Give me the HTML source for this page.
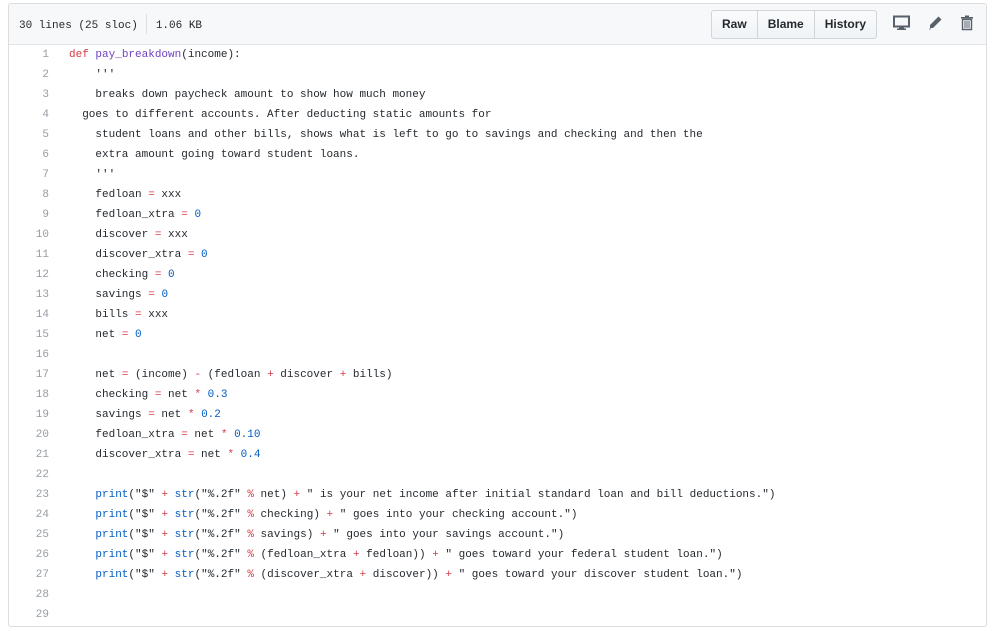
<!DOCTYPE html>
<html><head><style>
body{margin:0;background:#fff;font-family:"Liberation Sans",sans-serif;}
.box{position:absolute;left:8px;top:3px;width:977px;height:622px;border:1px solid #ddd;border-radius:3px;overflow:hidden}
.hd{height:40px;background:#f6f8fa;border-bottom:1px solid #e1e4e8;position:relative}
.info{position:absolute;left:10px;top:11px;font:11px "Liberation Mono",monospace;color:#24292e}
.sep{display:inline-block;width:1px;height:20px;background:#ddd;vertical-align:middle;margin:0 9px 0 8px;position:relative;top:-1px}
.btns{position:absolute;left:702px;top:6px;height:27px;border:1px solid #d1d5da;border-radius:3px;background:linear-gradient(#fafbfc,#eff3f6);display:flex}
.btns span{font:bold 12px "Liberation Sans",sans-serif;color:#24292e;line-height:27px;padding:0 10px;border-left:1px solid #d1d5da}
.btns span:first-child{border-left:0}
.ic{position:absolute;top:11px}
pre{margin:0;font:11px/20px "Liberation Mono",monospace;color:#24292e}
.code{position:absolute;left:0;top:41px}
.row{display:flex;height:20px}
.n{width:40px;text-align:right;color:#959da5;padding-right:20px}
.k{color:#d73a49}.f{color:#6f42c1}.c{color:#005cc5}.s{color:#24292e}
</style></head><body>
<div class="box">
<div class="hd">
<div class="info">30 lines (25 sloc)<span class="sep"></span>1.06 KB</div>
<div class="btns"><span>Raw</span><span>Blame</span><span>History</span></div>
<svg class="ic" style="left:884px" width="18" height="16" viewBox="0 0 18 16"><rect x="1" y="1.5" width="15" height="10" fill="none" stroke="#586069" stroke-width="2"/><rect x="6" y="12" width="5" height="2" fill="#586069"/><rect x="4" y="13.5" width="9" height="1.5" fill="#586069"/></svg>
<svg class="ic" style="left:918px" width="16" height="16" viewBox="0 0 16 16"><path d="M11.5 1.5l3 3-8.5 8.5-3 0 0-3z" fill="#586069"/><path d="M3 13l-1 2 2-1z" fill="#586069"/></svg>
<svg class="ic" style="left:951px" width="14" height="16" viewBox="0 0 14 16"><rect x="1" y="2" width="12" height="1.6" fill="#586069"/><rect x="5" y="0.5" width="4" height="1.5" fill="#586069"/><path d="M2.5 4.5h9v10h-9z" fill="none" stroke="#586069" stroke-width="1.4"/><path d="M5 6v7M7 6v7M9 6v7" stroke="#586069" stroke-width="1"/></svg>
</div>
<pre class="code"><div class="row"><span class="n">1</span><span><span class="k">def</span> <span class="f">pay_breakdown</span>(income):</span></div><div class="row"><span class="n">2</span><span>    '''</span></div><div class="row"><span class="n">3</span><span>    breaks down paycheck amount to show how much money</span></div><div class="row"><span class="n">4</span><span>  goes to different accounts. After deducting static amounts for</span></div><div class="row"><span class="n">5</span><span>    student loans and other bills, shows what is left to go to savings and checking and then the</span></div><div class="row"><span class="n">6</span><span>    extra amount going toward student loans.</span></div><div class="row"><span class="n">7</span><span>    '''</span></div><div class="row"><span class="n">8</span><span>    fedloan <span class="k">=</span> xxx</span></div><div class="row"><span class="n">9</span><span>    fedloan_xtra <span class="k">=</span> <span class="c">0</span></span></div><div class="row"><span class="n">10</span><span>    discover <span class="k">=</span> xxx</span></div><div class="row"><span class="n">11</span><span>    discover_xtra <span class="k">=</span> <span class="c">0</span></span></div><div class="row"><span class="n">12</span><span>    checking <span class="k">=</span> <span class="c">0</span></span></div><div class="row"><span class="n">13</span><span>    savings <span class="k">=</span> <span class="c">0</span></span></div><div class="row"><span class="n">14</span><span>    bills <span class="k">=</span> xxx</span></div><div class="row"><span class="n">15</span><span>    net <span class="k">=</span> <span class="c">0</span></span></div><div class="row"><span class="n">16</span><span></span></div><div class="row"><span class="n">17</span><span>    net <span class="k">=</span> (income) <span class="k">-</span> (fedloan <span class="k">+</span> discover <span class="k">+</span> bills)</span></div><div class="row"><span class="n">18</span><span>    checking <span class="k">=</span> net <span class="k">*</span> <span class="c">0.3</span></span></div><div class="row"><span class="n">19</span><span>    savings <span class="k">=</span> net <span class="k">*</span> <span class="c">0.2</span></span></div><div class="row"><span class="n">20</span><span>    fedloan_xtra <span class="k">=</span> net <span class="k">*</span> <span class="c">0.10</span></span></div><div class="row"><span class="n">21</span><span>    discover_xtra <span class="k">=</span> net <span class="k">*</span> <span class="c">0.4</span></span></div><div class="row"><span class="n">22</span><span></span></div><div class="row"><span class="n">23</span><span>    <span class="c">print</span>(<span class="s">"$"</span> <span class="k">+</span> <span class="c">str</span>(<span class="s">"%.2f"</span> <span class="k">%</span> net) <span class="k">+</span> <span class="s">" is your net income after initial standard loan and bill deductions."</span>)</span></div><div class="row"><span class="n">24</span><span>    <span class="c">print</span>(<span class="s">"$"</span> <span class="k">+</span> <span class="c">str</span>(<span class="s">"%.2f"</span> <span class="k">%</span> checking) <span class="k">+</span> <span class="s">" goes into your checking account."</span>)</span></div><div class="row"><span class="n">25</span><span>    <span class="c">print</span>(<span class="s">"$"</span> <span class="k">+</span> <span class="c">str</span>(<span class="s">"%.2f"</span> <span class="k">%</span> savings) <span class="k">+</span> <span class="s">" goes into your savings account."</span>)</span></div><div class="row"><span class="n">26</span><span>    <span class="c">print</span>(<span class="s">"$"</span> <span class="k">+</span> <span class="c">str</span>(<span class="s">"%.2f"</span> <span class="k">%</span> (fedloan_xtra <span class="k">+</span> fedloan)) <span class="k">+</span> <span class="s">" goes toward your federal student loan."</span>)</span></div><div class="row"><span class="n">27</span><span>    <span class="c">print</span>(<span class="s">"$"</span> <span class="k">+</span> <span class="c">str</span>(<span class="s">"%.2f"</span> <span class="k">%</span> (discover_xtra <span class="k">+</span> discover)) <span class="k">+</span> <span class="s">" goes toward your discover student loan."</span>)</span></div><div class="row"><span class="n">28</span><span></span></div><div class="row"><span class="n">29</span><span></span></div></pre>
</div>
</body></html>
